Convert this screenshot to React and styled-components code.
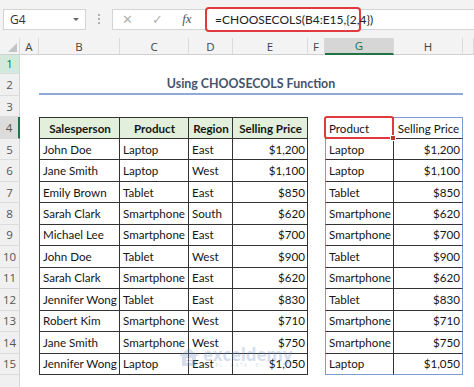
import styled, { createGlobalStyle } from "styled-components";

const GlobalStyle = createGlobalStyle`
  html, body {
    margin: 0;
    padding: 0;
    background: #ffffff;
  }
  body {
    font-family: Lato, "Open Sans", sans-serif;
    overflow: hidden;
  }
`;

const COLS = "20px 19px 81px 69px 44px 75px 17px 69px 69px 1fr";

const sales = [
  ["John Doe", "Laptop", "East", "$1,200"],
  ["Jane Smith", "Laptop", "West", "$1,100"],
  ["Emily Brown", "Tablet", "East", "$850"],
  ["Sarah Clark", "Smartphone", "South", "$620"],
  ["Michael Lee", "Smartphone", "East", "$700"],
  ["John Doe", "Tablet", "West", "$900"],
  ["Sarah Clark", "Smartphone", "East", "$620"],
  ["Jennifer Wong", "Tablet", "East", "$830"],
  ["Robert Kim", "Smartphone", "West", "$710"],
  ["Jane Smith", "Smartphone", "West", "$750"],
  ["Jennifer Wong", "Laptop", "East", "$1,050"],
];

const Page = styled.div`
  position: relative;
  width: 474px;
  height: 387px;
  overflow: hidden;
  background: #fff;
`;

const FormulaBar = styled.div`
  height: 38px;
  background: #f3f3f3;
  display: flex;
  align-items: center;
  padding: 0 0 0 3px;
  box-sizing: border-box;
  font-family: "Open Sans", sans-serif;
`;

const NameBox = styled.div`
  width: 83px;
  height: 21px;
  background: #fff;
  border: 1px solid #d4d4d4;
  box-sizing: border-box;
  display: flex;
  align-items: center;
  justify-content: space-between;
  padding: 0 6px 0 6px;
  font-size: 12px;
  color: #333;
`;

const Caret = styled.span`
  width: 0;
  height: 0;
  border-left: 3px solid transparent;
  border-right: 3px solid transparent;
  border-top: 3px solid #666;
`;

const Grip = styled.div`
  width: 26px;
  display: flex;
  flex-direction: column;
  align-items: center;
  gap: 2px;

  span {
    width: 2px;
    height: 2px;
    background: #b0b0b0;
  }
`;

const FormulaField = styled.div`
  flex: 1;
  height: 21px;
  background: #fff;
  border: 1px solid #d4d4d4;
  border-right: none;
  box-sizing: border-box;
  display: flex;
  align-items: center;
`;

const FxButtons = styled.div`
  width: 88px;
  display: flex;
  align-items: center;
  justify-content: space-around;
  color: #b4b4b4;
  font-size: 13px;
`;

const Fx = styled.span`
  font-family: "Liberation Serif", serif;
  font-style: italic;
  font-size: 13px;
  color: #555;
`;

const FormulaText = styled.div`
  margin-left: 4px;
  height: 25px;
  width: 156px;
  border: 2px solid #e0393e;
  border-radius: 4px;
  box-sizing: border-box;
  display: flex;
  align-items: center;
  padding-left: 8px;
  font-family: Lato, sans-serif;
  font-size: 12px;
  color: #222;
  white-space: nowrap;
  background: #fff;
`;

const Grid = styled.div`
  display: flex;
  flex-direction: column;
`;

const Row = styled.div`
  display: grid;
  grid-template-columns: ${COLS};
  height: ${({ $h }) => $h || "21.47px"};
`;

const ColHead = styled.div`
  background: ${({ $active }) => ($active ? "#d6d6d6" : "#f3f3f3")};
  border-right: 1px solid #dadada;
  border-bottom: ${({ $active }) => ($active ? "2px solid #217346" : "1px solid #d0d0d0")};
  box-sizing: border-box;
  display: flex;
  align-items: center;
  justify-content: center;
  font-family: "Open Sans", sans-serif;
  font-size: 11.5px;
  color: ${({ $active }) => ($active ? "#217346" : "#444")};
`;

const Corner = styled(ColHead)`
  position: relative;
  &::after {
    content: "";
    position: absolute;
    right: 2px;
    bottom: 2px;
    border-left: 9px solid transparent;
    border-bottom: 9px solid #c4c4c4;
  }
`;

const RowHead = styled.div`
  background: ${({ $state }) =>
    $state === "green" ? "#d2eadb" : $state === "active" ? "#dcdcdc" : "#f0f0f0"};
  border-bottom: 1px solid #dcdcdc;
  border-right: ${({ $state }) => ($state === "active" ? "2px solid #217346" : "1px solid #d4d4d4")};
  box-sizing: border-box;
  display: flex;
  align-items: center;
  justify-content: center;
  font-family: "Open Sans", sans-serif;
  font-size: 11.5px;
  color: ${({ $state }) => ($state === "green" ? "#217346" : "#555")};
`;

const Blank = styled.div``;

const Title = styled.div`
  grid-column: 3 / 10;
  border-bottom: 2px solid #8eaadb;
  display: flex;
  align-items: center;
  justify-content: center;
  font-weight: 700;
  font-size: 12.4px;
  color: #44546a;
  margin-bottom: 1px;
`;

const Cell = styled.div`
  box-sizing: border-box;
  display: flex;
  align-items: center;
  justify-content: ${({ $align }) =>
    $align === "right" ? "flex-end" : $align === "center" ? "center" : "flex-start"};
  padding: 0 2px 0 3px;
  font-size: 11.6px;
  font-weight: ${({ $bold }) => ($bold ? 700 : 400)};
  color: #151515;
  white-space: nowrap;
  overflow: hidden;
  background: ${({ $fill }) => $fill || "transparent"};
  border-right: 1px solid ${({ $right }) => $right || "#333"};
  border-bottom: 1px solid ${({ $bottom }) => $bottom || "#333"};
  border-top: ${({ $top }) => ($top ? `1px solid ${$top}` : "none")};
  border-left: ${({ $left }) => ($left ? `1px solid ${$left}` : "none")};
`;

const Selected = styled(Cell)`
  position: relative;
  overflow: visible;
  &::before {
    content: "";
    position: absolute;
    inset: -2px -1px -1px -2px;
    border: 2px solid #e0393e;
    border-radius: 3px;
  }
  &::after {
    content: "";
    position: absolute;
    right: -3px;
    bottom: -3px;
    width: 4px;
    height: 4px;
    background: #c0392b;
    border: 1px solid #fff;
  }
`;

const Watermark = styled.div`
  position: absolute;
  left: 178px;
  top: 346px;
  display: flex;
  align-items: center;
  gap: 3px;
  opacity: 0.3;
  pointer-events: none;
`;

const WatermarkText = styled.div`
  display: flex;
  flex-direction: column;
  line-height: 1;

  b {
    font-family: "Open Sans", sans-serif;
    font-size: 17px;
    font-weight: 700;
    color: #7a93c4;
    letter-spacing: -0.2px;
  }
  small {
    font-family: "Open Sans", sans-serif;
    font-size: 5px;
    color: #8a9ab8;
    letter-spacing: 1.2px;
  }
`;

const BLUE = "#7d9bd3";

export default function App() {
  const letters = ["A", "B", "C", "D", "E", "F", "G", "H", ""];

  return (
    <Page>
      <GlobalStyle />
      <FormulaBar>
        <NameBox>
          G4
          <Caret />
        </NameBox>
        <Grip>
          <span />
          <span />
          <span />
        </Grip>
        <FormulaField>
          <FxButtons>
            <span>✕</span>
            <span>✓</span>
            <Fx>fx</Fx>
          </FxButtons>
          <FormulaText>=CHOOSECOLS(B4:E15,{"{2,4}"})</FormulaText>
        </FormulaField>
      </FormulaBar>

      <Grid>
        <Row $h="15px">
          <Corner />
          {letters.map((l, i) => (
            <ColHead key={i} $active={l === "G"}>
              {l}
            </ColHead>
          ))}
        </Row>

        <Row>
          <RowHead $state="green">1</RowHead>
        </Row>
        <Row>
          <RowHead>2</RowHead>
          <Blank />
          <Title>Using CHOOSECOLS Function</Title>
        </Row>
        <Row>
          <RowHead>3</RowHead>
        </Row>

        <Row>
          <RowHead $state="active">4</RowHead>
          <Blank />
          <Cell $bold $align="center" $fill="#e2efda" $top="#333" $left="#333">
            Salesperson
          </Cell>
          <Cell $bold $align="center" $fill="#e2efda" $top="#333">
            Product
          </Cell>
          <Cell $bold $align="center" $fill="#e2efda" $top="#333">
            Region
          </Cell>
          <Cell $bold $align="center" $fill="#e2efda" $top="#333">
            Selling Price
          </Cell>
          <Blank />
          <Selected $top={BLUE} $left={BLUE}>
            Product
          </Selected>
          <Cell $top={BLUE} $right={BLUE} $align="center">
            Selling Price
          </Cell>
        </Row>

        {sales.map((r, i) => {
          const last = i === sales.length - 1;
          return (
            <Row key={i}>
              <RowHead>{i + 5}</RowHead>
              <Blank />
              <Cell $left="#333">{r[0]}</Cell>
              <Cell>{r[1]}</Cell>
              <Cell>{r[2]}</Cell>
              <Cell $align="right">{r[3]}</Cell>
              <Blank />
              <Cell $left={BLUE} $bottom={last ? BLUE : "#333"}>
                {r[1]}
              </Cell>
              <Cell $align="right" $right={BLUE} $bottom={last ? BLUE : "#333"}>
                {r[3]}
              </Cell>
            </Row>
          );
        })}

        <Row>
          <RowHead />
        </Row>
      </Grid>

      <Watermark>
        <svg width="22" height="20" viewBox="0 0 22 20">
          <path d="M11 1 L21 9 L18 9 L18 19 L4 19 L4 9 L1 9 Z" fill="#7a93c4" />
          <path d="M8 12 L14 12 M8 15 L14 15" stroke="#fff" strokeWidth="1.5" />
        </svg>
        <WatermarkText>
          <b>exceldemy</b>
          <small>EXCEL · DATA · BI</small>
        </WatermarkText>
      </Watermark>
    </Page>
  );
}
